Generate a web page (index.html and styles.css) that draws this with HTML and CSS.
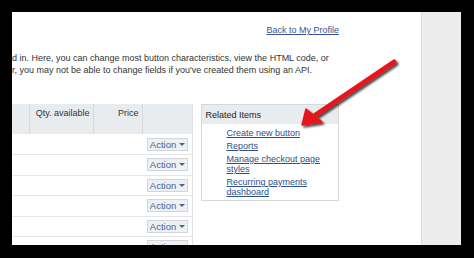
FILE: index.html
```html
<!DOCTYPE html>
<html>
<head>
<meta charset="utf-8">
<link rel="stylesheet" href="styles.css">
</head>
<body>
<div class="screen">
  <div class="main">
    <div class="content">
      <div class="toplinks"><a href="#" class="back">Back to My Profile</a></div>
      <p class="intro">d in. Here, you can change most button characteristics, view the HTML code, or<br>r, you may not be able to change fields if you've created them using an API.</p>
      <div class="lower">
        <table class="grid">
          <thead>
            <tr><th class="c1"></th><th class="c2">Qty. available</th><th class="c3">Price</th><th class="c4"></th></tr>
          </thead>
          <tbody>
            <tr><td></td><td></td><td></td><td><span class="action">Action <span class="caret"></span></span></td></tr>
            <tr><td></td><td></td><td></td><td><span class="action">Action <span class="caret"></span></span></td></tr>
            <tr><td></td><td></td><td></td><td><span class="action">Action <span class="caret"></span></span></td></tr>
            <tr><td></td><td></td><td></td><td><span class="action">Action <span class="caret"></span></span></td></tr>
            <tr><td></td><td></td><td></td><td><span class="action">Action <span class="caret"></span></span></td></tr>
            <tr><td></td><td></td><td></td><td><span class="action">Action <span class="caret"></span></span></td></tr>
          </tbody>
        </table>
        <div class="related">
          <div class="related-head">Related Items</div>
          <ul class="related-list">
            <li><a href="#">Create new button</a></li>
            <li><a href="#">Reports</a></li>
            <li><a href="#">Manage checkout page styles</a></li>
            <li><a href="#">Recurring payments dashboard</a></li>
          </ul>
        </div>
      </div>
    </div>
    <svg class="arrow" width="474" height="258" viewBox="0 0 474 258">
      <defs>
        <filter id="sh" x="-20%" y="-20%" width="140%" height="140%">
          <feGaussianBlur in="SourceAlpha" stdDeviation="1.2"/>
          <feOffset dx="1.5" dy="2" result="b"/>
          <feComponentTransfer><feFuncA type="linear" slope="0.7"/></feComponentTransfer>
          <feMerge><feMergeNode/><feMergeNode in="SourceGraphic"/></feMerge>
        </filter>
      </defs>
      <g filter="url(#sh)">
        <line x1="394" y1="62" x2="314" y2="116" stroke="#e8141a" stroke-width="5" stroke-linecap="round"/>
        <polygon points="302,125 306,109 322,122" fill="#e8141a" stroke="#e8141a" stroke-width="1.5" stroke-linejoin="round"/>
      </g>
    </svg>
  </div>
  <div class="side"></div>
</div>
</body>
</html>
```
FILE: styles.css
```css
html, body {
  margin: 0;
  padding: 0;
  background: #000;
}
body {
  width: 474px;
  height: 258px;
  overflow: hidden;
  font-family: "Liberation Sans", Arial, sans-serif;
  font-size: 9px;
  color: #333;
}
.screen {
  margin: 12px 0 0 12px;
  width: 449px;
  height: 233px;
  display: flex;
  overflow: hidden;
}
.main {
  width: 409px;
  height: 233px;
  background: #fff;
  overflow: hidden;
}
.side {
  width: 40px;
  height: 233px;
  background: #ececec;
  border-left: 1px solid #dcdcdc;
  box-sizing: border-box;
}
.content {
  width: 327px;
  display: flex;
  flex-direction: column;
}
.toplinks {
  height: 40px;
  display: flex;
  justify-content: flex-end;
  align-items: flex-start;
  padding-top: 13px;
  box-sizing: border-box;
}
.back {
  color: #33569a;
  text-decoration: underline;
  line-height: 11px;
}
.intro {
  margin: 0;
  line-height: 12px;
  height: 52px;
  color: #333;
  white-space: nowrap;
}
.lower {
  display: flex;
  align-items: flex-start;
  gap: 8px;
}
.grid {
  width: 180px;
  border-collapse: collapse;
  table-layout: fixed;
  border-right: 1px solid #dfe2e6;
}
.grid th {
  height: 30px;
  background: #e9ecef;
  font-weight: normal;
  text-align: right;
  vertical-align: top;
  padding: 4px 3px 0 0;
  border-left: 1px solid #d3d8dd;
  color: #333;
  box-sizing: border-box;
}
.grid th.c1 { width: 17px; border-left: none; }
.grid th.c2 { width: 64px; }
.grid th.c3 { width: 49px; }
.grid th.c4 { width: 50px; }
.grid td {
  height: 20.5px;
  padding: 0;
  border-bottom: 1px solid #e4e6e9;
  box-sizing: border-box;
}
.grid td:last-child {
  padding-left: 5px;
}
.action {
  display: inline-flex;
  align-items: center;
  justify-content: center;
  gap: 3px;
  width: 41px;
  height: 13px;
  box-sizing: border-box;
  border: 1px solid #d2d6da;
  background: #eef0f2;
  color: #45639a;
  font-size: 9.5px;
  line-height: 11px;
  vertical-align: middle;
}
.caret {
  width: 0;
  height: 0;
  border-left: 3px solid transparent;
  border-right: 3px solid transparent;
  border-top: 3px solid #45639a;
}
.related {
  width: 139px;
  height: 97px;
  border: 1px solid #d5d9dd;
  box-sizing: border-box;
}
.related-head {
  height: 19px;
  background: #e9ecef;
  padding: 5px 0 0 4px;
  box-sizing: border-box;
  color: #222;
}
.related-list {
  list-style: none;
  margin: 0;
  padding: 4px 12px 0 25px;
}
.related-list li {
  line-height: 10px;
  margin-bottom: 3px;
}
.related-list a {
  color: #2d4f8a;
  text-decoration: underline;
}
.arrow {
  position: absolute;
  left: 0;
  top: 0;
  pointer-events: none;
}
```
